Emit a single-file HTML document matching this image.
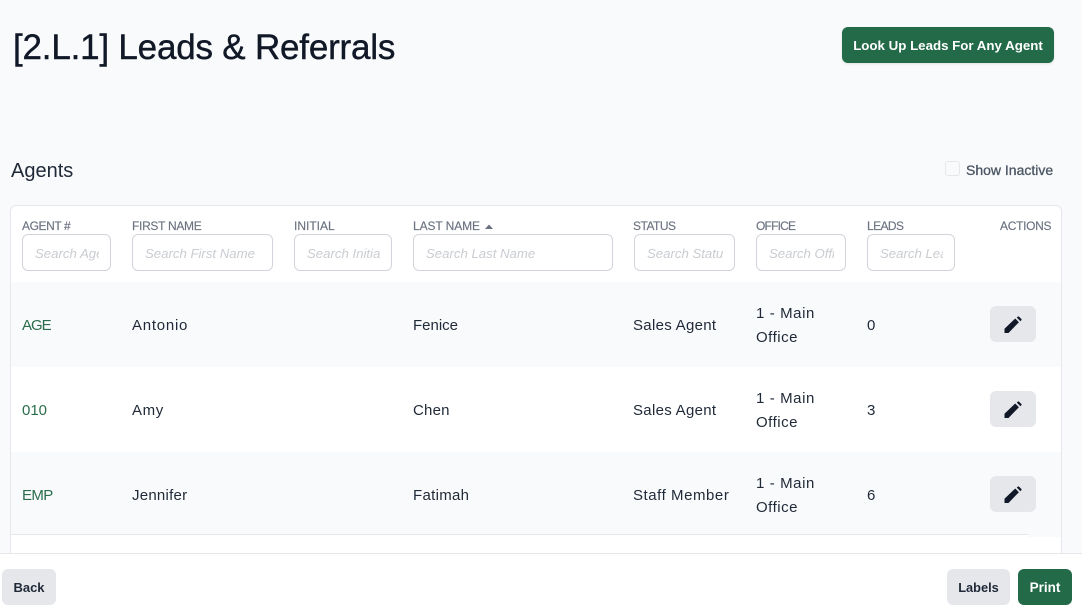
<!DOCTYPE html>
<html><head><meta charset="utf-8"><style>
*{box-sizing:border-box}
html,body{margin:0;padding:0;width:1082px;height:610px;overflow:hidden;background:#f9fafb;font-family:"Liberation Sans",sans-serif;color:#111827}
.a{position:absolute;white-space:nowrap}
.th{font-size:12px;color:#6b7280;top:219px;line-height:14px;-webkit-text-stroke:.15px #6b7280}
.in{position:absolute;top:234px;height:37px;background:#fff;border:1px solid #d1d5db;border-radius:6px;overflow:hidden;font-style:italic;font-size:13.2px;color:#c9ccd1;line-height:37px;padding-left:12px;white-space:nowrap}
.in span{display:block;overflow:hidden;margin-right:11px}
.td{font-size:15px;color:#1f2937;line-height:24px}
.g{color:#2a6d4c}
.btn{position:absolute;border-radius:6px;font-weight:700;font-size:13.3px;text-align:center}
.gr{background:#e5e7eb;color:#1f2937}
.gn{background:#236a49;color:#fff}
.ed{position:absolute;left:990px;width:46px;height:36px;background:#e5e7eb;border-radius:6px}
.ed svg{position:absolute;left:11px;top:6px}
.row{position:absolute;left:11px;width:1050px;height:85px}
.ag{letter-spacing:.3px}
.of1{letter-spacing:.6px}
</style></head><body>
<div class="a" style="left:13px;top:26px;font-size:35px;line-height:44px;color:#111827;letter-spacing:-.2px;-webkit-text-stroke:.4px #111827">[2.L.1] Leads &amp; Referrals</div>
<div class="btn gn" style="left:842px;top:27px;width:212px;height:36px;line-height:37px;box-shadow:0 1px 2px rgba(0,0,0,.1)">Look Up Leads For Any Agent</div>
<div class="a" style="left:11px;top:158px;font-size:20px;line-height:26px;color:#1f2937">Agents</div>
<div class="a" style="left:945px;top:161px;width:15px;height:15px;border:1px solid #e5e7eb;border-radius:3px;background:#f9fafb"></div>
<div class="a" style="left:966px;top:162px;font-size:14px;line-height:17px;color:#4b5563;-webkit-text-stroke:.3px #4b5563">Show Inactive</div>

<div class="a" style="left:10px;top:205px;width:1052px;height:360px;background:#fff;border:1px solid #e5e7eb;border-radius:6px"></div>
<div class="row" style="top:282px;background:#f9fafb"></div>
<div class="row" style="top:367px;background:#fff"></div>
<div class="row" style="top:452px;background:#f9fafb"></div>
<div class="a" style="left:11px;top:534px;width:1017px;height:1px;background:#e5e7eb"></div>
<div class="a" style="left:11px;top:535px;width:1017px;height:18px;background:#fff"></div>

<div class="a th" style="left:22px;letter-spacing:-.4px">AGENT #</div>
<div class="a th" style="left:132px;letter-spacing:-.3px">FIRST NAME</div>
<div class="a th" style="left:294px">INITIAL</div>
<div class="a th" style="left:413px;letter-spacing:-.1px">LAST NAME</div>
<svg class="a" style="left:484px;top:223px" width="10" height="7" viewBox="0 0 10 7"><path d="M1 6L5 1.500L9 6Z" fill="#6b7280"/></svg>
<div class="a th" style="left:633px;letter-spacing:-.5px">STATUS</div>
<div class="a th" style="left:756px;letter-spacing:-.8px">OFFICE</div>
<div class="a th" style="left:867px;letter-spacing:-.6px">LEADS</div>
<div class="a th" style="left:1000px;letter-spacing:-.3px">ACTIONS</div>

<div class="in" style="left:22px;width:89px"><span>Search Agent #</span></div>
<div class="in" style="left:132px;width:141px"><span>Search First Name</span></div>
<div class="in" style="left:294px;width:98px"><span>Search Initial</span></div>
<div class="in" style="left:413px;width:200px"><span>Search Last Name</span></div>
<div class="in" style="left:634px;width:101px"><span>Search Status</span></div>
<div class="in" style="left:756px;width:90px"><span>Search Office</span></div>
<div class="in" style="left:867px;width:88px"><span>Search Leads</span></div>

<div class="a td g" style="left:22px;top:314px;letter-spacing:-1px">AGE</div>
<div class="a td" style="left:132px;top:314px;letter-spacing:.75px">Antonio</div>
<div class="a td" style="left:413px;top:314px">Fenice</div>
<div class="a td ag" style="left:633px;top:314px">Sales Agent</div>
<div class="a td" style="left:756px;top:302px"><span class="of1">1 - Main</span><br><span style="letter-spacing:.5px">Office</span></div>
<div class="a td" style="left:867px;top:314px">0</div>
<div class="ed" style="top:306px"><svg width="24" height="24" viewBox="0 0 24 24"><path fill="#111827" d="M3.500 16.800L14.200 6.500l3.700 3.700L7.500 21H3.500zM15.800 5.600l.9-.9c.4-.4 1-.4 1.400 0l2.200 2.200c.4.4.4 1 0 1.400l-.9.9z"/></svg></div>

<div class="a td g" style="left:22px;top:399px">010</div>
<div class="a td" style="left:132px;top:399px;letter-spacing:.6px">Amy</div>
<div class="a td" style="left:413px;top:399px;letter-spacing:.2px">Chen</div>
<div class="a td ag" style="left:633px;top:399px">Sales Agent</div>
<div class="a td" style="left:756px;top:387px"><span class="of1">1 - Main</span><br><span style="letter-spacing:.5px">Office</span></div>
<div class="a td" style="left:867px;top:399px">3</div>
<div class="ed" style="top:391px"><svg width="24" height="24" viewBox="0 0 24 24"><path fill="#111827" d="M3.500 16.800L14.200 6.500l3.700 3.700L7.500 21H3.500zM15.800 5.600l.9-.9c.4-.4 1-.4 1.400 0l2.200 2.200c.4.4.4 1 0 1.400l-.9.9z"/></svg></div>

<div class="a td g" style="left:22px;top:484px;letter-spacing:-.6px">EMP</div>
<div class="a td" style="left:132px;top:484px;letter-spacing:.25px">Jennifer</div>
<div class="a td" style="left:413px;top:484px;letter-spacing:.3px">Fatimah</div>
<div class="a td" style="left:633px;top:484px;letter-spacing:.55px">Staff Member</div>
<div class="a td" style="left:756px;top:472px"><span class="of1">1 - Main</span><br><span style="letter-spacing:.5px">Office</span></div>
<div class="a td" style="left:867px;top:484px">6</div>
<div class="ed" style="top:476px"><svg width="24" height="24" viewBox="0 0 24 24"><path fill="#111827" d="M3.500 16.800L14.200 6.500l3.700 3.700L7.500 21H3.500zM15.800 5.600l.9-.9c.4-.4 1-.4 1.400 0l2.200 2.200c.4.4.4 1 0 1.400l-.9.9z"/></svg></div>

<div class="a" style="left:0;top:553px;width:1082px;height:57px;background:#fff;border-top:1px solid #e5e7eb"></div>
<div class="btn gr" style="left:2px;top:569px;width:54px;height:36px;line-height:37px;font-size:13px">Back</div>
<div class="btn gr" style="left:947px;top:569px;width:63px;height:36px;line-height:37px;font-size:12.8px">Labels</div>
<div class="btn gn" style="left:1018px;top:569px;width:54px;height:36px;line-height:37px;font-size:13.5px">Print</div>
</body></html>
